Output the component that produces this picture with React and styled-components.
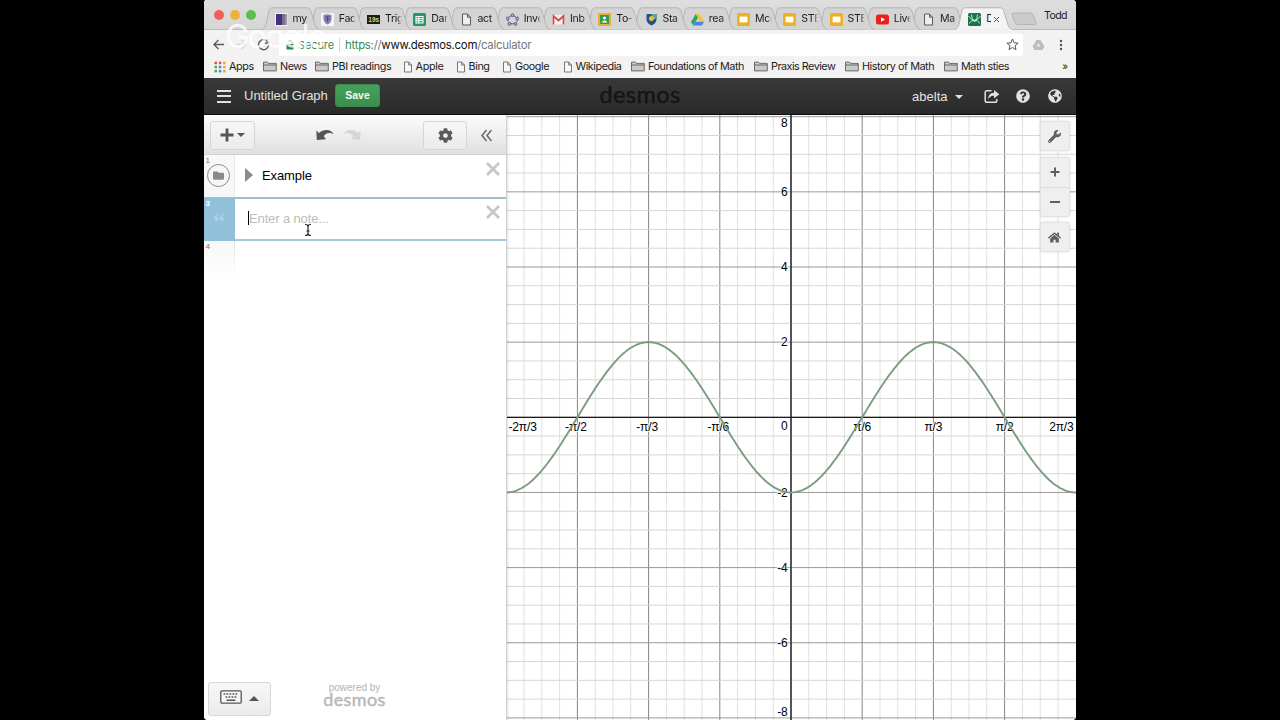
import React from 'react';
import styled, { createGlobalStyle, css } from 'styled-components';
import { FaWrench, FaCog, FaHome, FaQuestionCircle, FaGlobeAmericas, FaFolder } from 'react-icons/fa';

const Global = createGlobalStyle`
  * { box-sizing: border-box; }
  body { margin: 0; background: #000; overflow: hidden; }
`;

const Stage = styled.div`
  width: 1280px;
  height: 720px;
  background: #000;
  display: flex;
  justify-content: center;
  font-family: "Liberation Sans", Arial, sans-serif;
`;

const Window = styled.div`
  position: relative;
  width: 872px;
  height: 720px;
  display: flex;
  flex-direction: column;
  background: #fff;
  border-radius: 3px 4px 4px 4px;
  overflow: hidden;
`;

/* ---------- browser chrome ---------- */

const Chrome = styled.div`
  height: 78px;
  flex: none;
  display: flex;
  flex-direction: column;
  background: #f2f2f2;
  font-family: Inter, sans-serif;
  color: #1c1c1c;
`;

const TabStrip = styled.div`
  height: 30px;
  flex: none;
  display: flex;
  background: linear-gradient(#dedede, #d6d6d6);
  border-bottom: 1px solid #bcbcbc;
`;

const Lights = styled.div`
  width: 57.5px;
  flex: none;
  display: flex;
  gap: 6px;
  padding: 10px 0 0 9.5px;
`;

const Light = styled.span`
  width: 10px;
  height: 10px;
  border-radius: 50%;
  background: ${(p) => p.$color};
`;

const TabItem = styled.div`
  position: relative;
  z-index: ${(p) => p.$z};
  width: 46.25px;
  height: 30px;
  flex: none;
  display: flex;
  align-items: center;
  gap: 5px;
  padding: 8px 0 0 13px;
  & > * { flex: none; }
`;

const TabShape = styled.svg`
  position: absolute;
  left: 0;
  top: 7px;
`;

const TabIcon = styled.svg`
  position: relative;
  width: 13px;
  height: 13px;
`;

const TabLabel = styled.span`
  position: relative;
  width: ${(p) => p.$w}px;
  overflow: hidden;
  white-space: nowrap;
  font-size: 10.6px;
  line-height: 16px;
  letter-spacing: -0.35px;
  ${(p) => p.$fade && css`mask-image: linear-gradient(90deg, #000 75%, transparent);`}
`;

const TabClose = styled.svg`
  position: relative;
  width: 7px;
  height: 7px;
  margin-left: -3px;
`;

const NewTab = styled.svg`
  width: 28px;
  height: 14px;
  margin: 12px 0 0 8px;
`;

const Profile = styled.span`
  margin: 9px 9px 0 auto;
  font-size: 10.6px;
  line-height: 14px;
  letter-spacing: -0.6px;
`;

const Toolbar = styled.div`
  height: 27px;
  flex: none;
  display: flex;
  align-items: center;
  padding: 2px 9px 0 8px;
`;

const NavIcon = styled.svg`
  width: 13px;
  height: 13px;
  margin-right: ${(p) => p.$mr}px;
  flex: none;
`;

const Address = styled.div`
  width: 744px;
  height: 22px;
  flex: none;
  display: flex;
  align-items: center;
  background: #fff;
  padding: 0 4px 0 6px;
  font-size: 11.4px;
  letter-spacing: -0.26px;
  color: #777;
  border-radius: 2px;
`;

const Secure = styled.span`
  width: 38px;
  margin-left: 3px;
  color: #398a53;
  font-size: 11px;
  letter-spacing: -0.1px;
`;

const Divider = styled.span`
  width: 1px;
  height: 14px;
  background: #d5d5d5;
  margin: 0 5px 0 3px;
`;

const Https = styled.span`color: #398a53;`;
const Host = styled.span`color: #111;`;

const StarIcon = styled.svg`
  width: 13px;
  height: 13px;
  margin-left: auto;
`;

const Bookmarks = styled.div`
  height: 19px;
  flex: none;
  display: flex;
  align-items: center;
  padding-left: 10px;
`;

const Bookmark = styled.div`
  width: ${(p) => p.$w}px;
  flex: none;
  display: flex;
  align-items: center;
  gap: 3px;
  white-space: nowrap;
  font-size: 10.8px;
  letter-spacing: ${(p) => p.$ls}px;
`;

const More = styled.span`
  margin: -2px 8px 0 auto;
  font-size: 10px;
`;

const Watermark = styled.div`
  position: absolute;
  z-index: 30;
  left: 21px;
  top: 16px;
  font: 33px/40px Inter, sans-serif;
  letter-spacing: -2px;
  color: rgba(255, 255, 255, 0.78);
`;

const DocIcon = () => (
  <svg width="10" height="12" viewBox="0 0 10 12" fill="#f7f7f7" stroke="#6a6a6a" strokeWidth="0.9">
    <path d="M1.5 1h4.2l2.8 3v7h-7zM5.7 1v3h2.8" />
  </svg>
);

const FolderIcon = () => (
  <svg width="14" height="11" viewBox="0 0 14 11" fill="#c9c9c9" stroke="#5f5f5f" strokeWidth="0.9">
    <path d="M.5 9.9V1.1h4l1 1.3h7.800v7.5zM.5 4h12.800" />
  </svg>
);

const AppsIcon = () => {
  const colors = ['#e0523f', '#e0523f', '#e8a33a', '#5aa055', '#4e86d8', '#e8a33a', '#5aa055', '#4e86d8', '#e8a33a'];
  return (
    <svg width="12" height="12">
      {colors.map((c, i) => (
        <rect key={i} x={0.5 + (i % 3) * 4.3} y={0.7 + Math.floor(i / 3) * 4.1} width="2.5" height="2.5" fill={c} />
      ))}
    </svg>
  );
};

const slides = (
  <g><rect x="0" y="0" width="13" height="13" rx="1.5" fill="#edb125" /><rect x="2.6" y="3.6" width="7.8" height="5.8" fill="#fff" /></g>
);

const tabIcons = {
  my: <g><rect width="13" height="13" fill="#f3f0f8" /><rect x="1" y="1" width="6" height="11" fill="#44307e" /><rect x="7" y="1" width="3" height="11" fill="#77718a" /><rect x="10" y="1" width="2.2" height="11" fill="#9a96a5" /></g>,
  shield: <g><rect width="13" height="13" fill="#f5f4fa" /><path d="M2.5 2q4-1.5 8 0v4q-.5 4-4 5.6-3.5-1.6-4-5.6z" fill="#8b82b4" /><path d="M4 4h5M4.5 6.5h4M6.5 3v6" stroke="#564b8c" /></g>,
  trig: <g><rect y="2" width="13" height="9" fill="#1b1b19" /><text x="1.3" y="9.3" fontSize="6.5" fontWeight="700" fill="#d9dd7b" fontFamily="Liberation Sans">19s</text></g>,
  sheet: <g><rect width="13" height="13" rx="1.5" fill="#1c9c60" /><path d="M3 3.5h7v6.5H3zM3 5.7h7M3 7.8h7M5.8 3.5v6.5" fill="none" stroke="#fff" strokeWidth="1.1" /></g>,
  doc: <path d="M2.5 1h5l3 3.2v7.8h-8zM7.5 1v3.2h3" fill="#eee" stroke="#5b5b5b" />,
  geo: <g fill="#b6b6dd" stroke="#5b5b86" strokeWidth="1"><ellipse cx="6.5" cy="6.8" rx="4.8" ry="4" fill="none" />{[[6.5, 2.2], [11.3, 5.4], [9.5, 11], [3.5, 11], [1.7, 5.4]].map(([x, y]) => <circle key={x} cx={x} cy={y} r="1.4" />)}</g>,
  gmail: <g><rect x=".5" y="2" width="12" height="9.5" fill="#f5f0ef" /><path d="M1.5 11.5V3l5 4.5 5-4.5v8.5" fill="none" stroke="#d54b40" strokeWidth="1.7" /></g>,
  classroom: <g><rect width="13" height="13" fill="#e7b32c" /><rect x="2" y="2" width="9" height="9" fill="#38985a" /><circle cx="6.5" cy="5" r="1.5" fill="#fff" /><path d="M3.5 9.5q3-4 6 0z" fill="#fff" /></g>,
  state: <g><path d="M1.5 1h10v6q-1 4-5 5.5-4-1.5-5-5.5z" fill="#23518c" /><path d="M6.5 1h5v5h-5z" fill="#58a3a0" /><circle cx="6.5" cy="5.5" r="2.5" fill="#e6c13d" /></g>,
  drive: <g><path d="M4.7 1h4l4.3 7.5H9z" fill="#f4c534" /><path d="M4.7 1 0 9l2.2 3.5L7 4.7z" fill="#2da566" /><path d="M4 8.7h9l-2.2 3.8H2.2z" fill="#4687e8" /></g>,
  slides,
  youtube: <g><rect x="0" y="1.5" width="13" height="10" rx="2.5" fill="#e8211c" /><path d="M5 4.2v4.6l4-2.3z" fill="#fff" /></g>,
  desmos: <g><rect width="13" height="13" rx="1.5" fill="#16764a" /><path d="M.5 3q6 9 12 0M1 10.5q5.5-7 11 0M3.5 1.5q0 5 3 7.5 3-2.5 3-7.5" fill="none" stroke="#d8efe2" strokeWidth=".9" /></g>,
};

const tabs = [
  ['my', 'my'], ['shield', 'Fac'], ['trig', 'Trig'], ['sheet', 'Dar'], ['doc', 'act'], ['geo', 'Inve'],
  ['gmail', 'Inb'], ['classroom', 'To-'], ['state', 'Sta'], ['drive', 'rea'], ['slides', 'Mcc'], ['slides', 'STE'],
  ['slides', 'STE'], ['youtube', 'Live'], ['doc', 'Ma'], ['desmos', 'D'],
];

function Tab({ icon, label, index, active }) {
  return (
    <TabItem $z={active ? 20 : 18 - index}>
      <TabShape width="60" height="24">
        <path
          d="M0 22.5Q3 21.5 4 17.5L7 3Q8 .8 10 .8H45.5Q47.5 .8 48.5 3L53 18Q54.5 22 57 22.5"
          fill={active ? '#f4f4f4' : '#d4d4d4'}
          stroke="#b0b0b0"
          strokeWidth=".9"
        />
        {active && <path d="M1 23h56" stroke="#f4f4f4" strokeWidth="1.5" />}
      </TabShape>
      <TabIcon viewBox="0 0 13 13">{tabIcons[icon]}</TabIcon>
      <TabLabel $w={active ? 5 : 17} $fade={!active}>{label}</TabLabel>
      {active && <TabClose viewBox="0 0 7 7"><path d="M1 1l5 5M6 1L1 6" stroke="#555" /></TabClose>}
    </TabItem>
  );
}

const bookmarks = [
  ['apps', 'Apps', 49, -0.4], ['folder', 'News', 52, -0.5], ['folder', 'PBI readings', 87.5, -0.41], ['doc', 'Apple', 53, -0.3],
  ['doc', 'Bing', 46.5, -0.4], ['doc', 'Google', 60.5, -0.4], ['doc', 'Wikipedia', 68.5, -0.45], ['folder', 'Foundations of Math', 123, -0.47],
  ['folder', 'Praxis Review', 91, -0.5], ['folder', 'History of Math', 99, -0.45], ['folder', 'Math sties', 70, -0.45],
];

function Browser() {
  return (
    <Chrome>
      <TabStrip>
        <Lights><Light $color="#f0605a" /><Light $color="#f0b040" /><Light $color="#5abf4c" /></Lights>
        {tabs.map(([icon, label], i) => <Tab key={i} icon={icon} label={label} index={i} active={i === 15} />)}
        <NewTab viewBox="0 0 28 14"><path d="M3 1h17q2 0 3 2l3 8q.5 1.5-2 1.5H8q-2 0-3-2L2 3Q1.5 1 3 1z" fill="#cbcbcb" stroke="#b0b0b0" strokeWidth=".9" /></NewTab>
        <Profile>Todd</Profile>
      </TabStrip>
      <Toolbar>
        <NavIcon $mr={10} viewBox="0 0 13 13"><path d="M12 6.5H2M6.5 2L2 6.5 6.5 11" fill="none" stroke="#5a5a5a" strokeWidth="1.3" /></NavIcon>
        <NavIcon $mr={9} viewBox="0 0 13 13"><path d="M1 6.5h10M6.5 2L11 6.5 6.5 11" fill="none" stroke="#d4d4d4" strokeWidth="1.3" /></NavIcon>
        <NavIcon $mr={9} viewBox="0 0 13 13"><path d="M10.8 4A5 5 0 1 0 11.5 7.5M11.5 1v4h-4" fill="none" stroke="#5a5a5a" strokeWidth="1.4" /></NavIcon>
        <Address>
          <svg width="10" height="12" viewBox="0 0 10 12"><rect x="1.5" y="5" width="7" height="5.5" fill="#2f8550" /><path d="M3 5V3.5a2 2 0 0 1 4 0V5" fill="none" stroke="#a8cbb5" /></svg>
          <Secure>Secure</Secure>
          <Divider />
          <Https>https:</Https>//<Host>www.desmos.com</Host>/calculator
          <StarIcon viewBox="0 0 13 13"><path d="M6.5 1l1.6 3.8 4 .3-3.1 2.6 1 4-3.5-2.2L3 11.7l1-4L.9 5.1l4-.3z" fill="none" stroke="#555" /></StarIcon>
        </Address>
        <svg width="13" height="12" viewBox="0 0 13 12" style={{ marginLeft: 9 }}><path d="M4.5 1h4l4 6.5-2 3.5h-8l-2-3.5z" fill="#bdbdbd" /><path d="M6.5 4.2L4.7 7.5h3.7z" fill="#eee" /></svg>
        <svg width="4" height="14" viewBox="0 0 4 14" style={{ marginLeft: 14 }}><g fill="#4f4f4f"><circle cx="2" cy="3" r="1.2" /><circle cx="2" cy="7" r="1.2" /><circle cx="2" cy="11" r="1.2" /></g></svg>
      </Toolbar>
      <Bookmarks>
        {bookmarks.map(([kind, label, w, ls]) => (
          <Bookmark key={label} $w={w} $ls={ls}>
            {kind === 'apps' && <AppsIcon />}
            {kind === 'folder' && <FolderIcon />}
            {kind === 'doc' && <DocIcon />}
            <span>{label}</span>
          </Bookmark>
        ))}
        <More>»</More>
      </Bookmarks>
    </Chrome>
  );
}

/* ---------- desmos header ---------- */

const Header = styled.header`
  height: 37px;
  flex: none;
  display: grid;
  grid-template-columns: 1fr auto 1fr;
  align-items: center;
  background: linear-gradient(#393939, #2a2a2a);
  border-bottom: 1px solid #0b0b0b;
  color: #e2e2e2;
`;

const HeaderLeft = styled.div`
  display: flex;
  align-items: center;
  padding-left: 13px;
`;

const HeaderRight = styled.div`
  display: flex;
  align-items: center;
  justify-content: flex-end;
  padding-right: 14px;
  font-size: 13px;
`;

const Burger = styled.div`
  width: 14px;
  height: 13px;
  border-top: 2px solid #e0e0e0;
  border-bottom: 2px solid #e0e0e0;
  display: flex;
  align-items: center;
  &::before { content: ''; width: 100%; height: 2px; background: #e0e0e0; }
`;

const Title = styled.div`
  width: 84px;
  margin: -1px 7px 0 13px;
  font-size: 13px;
  white-space: nowrap;
`;

const SaveButton = styled.button`
  width: 45px;
  height: 23px;
  margin-top: -1px;
  border: 1px solid #3b8b4c;
  border-radius: 3px;
  background: linear-gradient(#46a05a, #3c8e4e);
  color: #f2f8f3;
  padding: 0 0 1px;
  font: bold 10.5px "Liberation Sans", sans-serif;
`;

const Logo = styled.div`
  font-family: Lato, sans-serif;
  font-size: ${(p) => p.$size}px;
  line-height: 1;
  margin-top: ${(p) => p.$mt}px;
  color: ${(p) => p.$color};
  letter-spacing: ${(p) => p.$ls}px;
  -webkit-text-stroke: 0.5px ${(p) => p.$color};
`;

const Caret = styled.span`
  border: ${(p) => p.$s || 4}px solid transparent;
  border-bottom: 0;
  border-top-color: ${(p) => p.$color || '#e2e2e2'};
  margin: ${(p) => p.$m || '0'};
  transform: ${(p) => (p.$up ? 'rotate(180deg)' : 'none')};
`;

/* ---------- expression panel ---------- */

const Body = styled.main`
  flex: 1;
  min-height: 0;
  display: flex;
`;

const Panel = styled.section`
  width: 303px;
  flex: none;
  display: flex;
  flex-direction: column;
  background: #fff;
  border-right: 1px solid #d2d2d2;
  box-shadow: 1px 0 2px rgba(0, 0, 0, 0.12);
  z-index: 1;
`;

const PanelBar = styled.div`
  height: 40px;
  flex: none;
  display: flex;
  align-items: center;
  background: linear-gradient(#fcfcfc, #e0e0e0);
  border-bottom: 1px solid #d2d2d2;
  padding: 1px 14px 0 6px;
  color: #555;
`;

const BarButton = styled.button`
  display: flex;
  align-items: center;
  justify-content: center;
  gap: 3px;
  width: ${(p) => p.$w}px;
  height: ${(p) => p.$h || 29}px;
  padding: ${(p) => p.$pad || 0};
  border: 1px solid #d6d6d6;
  border-radius: 3px;
  background: linear-gradient(#f7f7f7, #ebebeb);
  color: #5a5a5a;
`;

const History = styled.div`
  display: flex;
  gap: 9px;
  margin-left: 61px;
  margin-right: auto;
`;

const Row = styled.div`
  height: ${(p) => p.$h}px;
  flex: none;
  display: flex;
  border-bottom: ${(p) => (p.$selected ? '2px solid #a7c8d6' : p.$last ? '0' : '2px solid #a5bcca')};
`;

const Gutter = styled.div`
  width: 31px;
  flex: none;
  display: flex;
  flex-direction: column;
  align-items: center;
  padding-top: 1px;
  font-size: 8px;
  line-height: 9px;
  color: ${(p) => (p.$selected ? '#fff' : '#777')};
  background: ${(p) => (p.$selected ? '#90c0da' : p.$fade ? 'linear-gradient(#f7f7f7, #fff)' : '#f7f7f7')};
  border-right: 1px solid ${(p) => (p.$selected ? '#90c0da' : '#e8e8e8')};
  ${(p) => p.$selected && css`margin-bottom: -2px; margin-top: -1px;`}
  ${(p) => p.$fade && css`border-image: linear-gradient(#ddd, #fff) 1;`}
`;

const RowNumber = styled.span`
  align-self: flex-start;
  padding-left: 1.5px;
  font-weight: ${(p) => (p.$bold ? 700 : 400)};
`;

const FolderBadge = styled.div`
  width: 23px;
  height: 23px;
  border: 1.5px solid #8a8a8a;
  border-radius: 50%;
  display: flex;
  align-items: center;
  justify-content: center;
  color: #8a8a8a;
  margin-top: -1px;
  margin-left: -1px;
`;

const Quote = styled.span`
  font: bold 25px/24px "Liberation Serif", serif;
  color: #add1e4;
  padding-top: 2px;
`;

const RowBody = styled.div`
  flex: 1;
  display: flex;
  align-items: center;
  padding: 0 5px ${(p) => p.$pb}px ${(p) => p.$pl}px;
  font-size: 13px;
  letter-spacing: ${(p) => p.$ls || 0}px;
  color: ${(p) => p.$color || '#000'};
`;

const TextCaret = styled.span`
  width: 1px;
  height: 14px;
  background: #000;
`;

const Disclosure = styled.span`
  border: 7px solid transparent;
  border-left: 8px solid #8a8a8a;
  border-right: 0;
  margin-right: 9px;
`;

const Delete = styled.svg`
  width: 16px;
  height: 16px;
  margin-left: auto;
  align-self: flex-start;
  margin-top: ${(p) => p.$mt}px;
`;

const Blank = styled.div`flex: 1;`;

const PanelFooter = styled.div`
  height: 40px;
  flex: none;
  display: flex;
  padding: 2px 0 0 4px;
`;

const Powered = styled.div`
  display: flex;
  flex-direction: column;
  align-items: center;
  margin-left: 50.5px;
  width: 66px;
  font-size: 10px;
  line-height: 12px;
  color: #b4b4b4;
`;

const IBeam = styled.svg`
  position: absolute;
  z-index: 5;
  left: 100px;
  top: 223px;
`;

const CloseX = ({ mt }) => (
  <Delete viewBox="0 0 16 16" $mt={mt}><path d="M2 2l12 12M14 2L2 14" stroke="#c6c6c6" strokeWidth="2.8" /></Delete>
);

function Expressions() {
  return (
    <Panel>
      <PanelBar>
        <BarButton $w={45}>
          <svg width="14" height="14"><path d="M7 .5v13M.5 7h13" stroke="#555" strokeWidth="2.8" /></svg>
          <Caret $color="#555" $s={4.5} />
        </BarButton>
        <History>
          <svg width="18" height="12"><path d="M.3 1.5L3 4C7 .5 14.5-1 17.8 5.5 13.5 3 10 4 7.8 7.2L10 10.2.8 11z" fill="#555" /></svg>
          <svg width="18" height="12"><path d="M17.7 1.5L15 4C11 .5 3.5-1 .2 5.5 4.5 3 8 4 10.2 7.2L8 10.2l9.2.8z" fill="#d6d6d6" /></svg>
        </History>
        <BarButton $w={44}><FaCog size={15} /></BarButton>
        <svg width="11" height="13" style={{ marginLeft: 14 }}><path d="M5.5 1L1 6.5l4.5 5.5M10.5 1L6 6.5l4.5 5.5" fill="none" stroke="#666" strokeWidth="1.5" /></svg>
      </PanelBar>
      <Row $h={44}>
        <Gutter>
          <RowNumber>1</RowNumber>
          <FolderBadge><FaFolder size={11} /></FolderBadge>
        </Gutter>
        <RowBody $pl={10} $pb={2} $ls={-0.1}><Disclosure />Example<CloseX mt={6} /></RowBody>
      </Row>
      <Row $h={42} $selected>
        <Gutter $selected>
          <RowNumber $bold>3</RowNumber>
          <Quote>“</Quote>
        </Gutter>
        <RowBody $pl={13} $pb={2} $ls={-0.13} $color="#bcbcbc"><TextCaret />Enter a note...<CloseX mt={5} /></RowBody>
      </Row>
      <Row $h={37} $last>
        <Gutter $fade><RowNumber>4</RowNumber></Gutter>
      </Row>
      <Blank />
      <PanelFooter>
        <BarButton $w={63} $h={34} $pad="0 0 4px">
          <svg width="22" height="14" viewBox="0 0 22 14" style={{ marginRight: 4 }}>
            <rect x=".8" y=".8" width="20.4" height="12.4" rx="1.2" fill="#f7f7f7" stroke="#555" strokeWidth="1.3" />
            <path d="M3.5 4h15M5.5 7h11" stroke="#555" strokeWidth="1.6" strokeDasharray="1.8 1.2" />
            <path d="M6.5 10.2h9" stroke="#555" strokeWidth="1.5" />
          </svg>
          <Caret $color="#555" $s={5} $m="3px 0 0" $up />
        </BarButton>
        <Powered>
          <span>powered by</span>
          <Logo $size={18} $ls={0.4} $mt={-4} $color="#b9b9b9">desmos</Logo>
        </Powered>
      </PanelFooter>
    </Panel>
  );
}

/* ---------- graph ---------- */

const GraphArea = styled.section`
  position: relative;
  flex: 1;
  min-width: 0;
  background: #fff;
`;

const Plot = styled.svg`
  display: block;
  font-family: "Liberation Sans", Arial, sans-serif;
  font-size: 12px;
`;

const AxisLabel = styled.text`
  fill: #000;
  stroke: #fff;
  stroke-width: 2px;
  stroke-opacity: 0.7;
  paint-order: stroke;
  letter-spacing: -0.15px;
`;

const Controls = styled.div`
  position: absolute;
  right: 6.5px;
  top: 6px;
  display: flex;
  flex-direction: column;
  gap: 5.5px;
`;

const ControlGroup = styled.div`
  width: 30px;
  border: 1px solid #e2e2e2;
  border-radius: 3px;
  background: #efefef;
  box-shadow: 0 0 3px rgba(0, 0, 0, 0.12);
`;

const Control = styled.button`
  width: 100%;
  height: ${(p) => p.$h}px;
  padding: 0;
  border: 0;
  background: none;
  display: flex;
  align-items: center;
  justify-content: center;
  color: #606060;
  & + & { border-top: 1px solid #dcdcdc; }
`;

const OX = 284;
const OY = 302.3;
const SX = 71.2;
const SY = 75.15;
const range = (a, b) => Array.from({ length: b - a + 1 }, (_, i) => a + i);

const curve = range(0, 285)
  .map((i) => {
    const x = i * 2;
    const y = OY + SY * Math.cos(((x - OX) / SX) * (Math.PI / 2));
    return `${i ? 'L' : 'M'}${x} ${y.toFixed(2)}`;
  })
  .join('');

const xLabels = [[-3, '-π/2'], [-2, '-π/3'], [-1, '-π/6'], [1, 'π/6'], [2, 'π/3'], [3, 'π/2']];
const yLabels = [[3, '6'], [2, '4'], [1, '2'], [-1, '-2'], [-2, '-4'], [-3, '-6']];

function Graph() {
  return (
    <GraphArea>
      <Plot width="569" height="605">
        {range(-15, 15).map((i) => (
          <path key={`v${i}`} d={`M${OX + (i * SX) / 4} 0V605`} stroke={i % 4 ? '#e0e0e0' : '#858585'} strokeWidth="1" />
        ))}
        {range(-16, 16).map((i) => (
          <path key={`h${i}`} d={`M0 ${OY - (i * SY) / 4}H569`} stroke={i % 4 ? '#d6d6d6' : '#999'} strokeWidth="1" />
        ))}
        <path d={`M0 ${OY}H569M${OX} 0V605`} stroke="#1a1a1a" strokeWidth="1.3" />
        {xLabels.map(([k, t]) => (
          <AxisLabel key={t} x={OX + k * SX - (k < 0 ? 1.5 : 0)} y="316.4" textAnchor="middle">{t}</AxisLabel>
        ))}
        <AxisLabel x="1.5" y="316.4">-2π/3</AxisLabel>
        <AxisLabel x="566.5" y="316.4" textAnchor="end">2π/3</AxisLabel>
        {yLabels.map(([k, t]) => (
          <AxisLabel key={t} x={OX - 3.5} y={OY - k * SY + 4.3} textAnchor="end">{t}</AxisLabel>
        ))}
        <AxisLabel x={OX - 3.5} y="12.4" textAnchor="end">8</AxisLabel>
        <AxisLabel x={OX - 3.5} y="315" textAnchor="end">0</AxisLabel>
        <AxisLabel x={OX - 3.5} y="601" textAnchor="end">-8</AxisLabel>
        <path d={curve} fill="none" stroke="#7c9c80" strokeWidth="1.9" />
      </Plot>
      <Controls>
        <ControlGroup><Control $h={28}><FaWrench size={13} /></Control></ControlGroup>
        <ControlGroup>
          <Control $h={29}><svg width="10" height="10"><path d="M5 .5v9M.5 5h9" stroke="#606060" strokeWidth="2" /></svg></Control>
          <Control $h={29}><svg width="10" height="4"><path d="M0 2h10" stroke="#606060" strokeWidth="2" /></svg></Control>
        </ControlGroup>
        <ControlGroup><Control $h={28}><FaHome size={13} /></Control></ControlGroup>
      </Controls>
    </GraphArea>
  );
}

const ShareIcon = styled.svg`
  width: 16px;
  height: 15px;
  margin-right: 16.5px;
`;

export default function App() {
  return (
    <Stage>
      <Global />
      <Window>
        <Browser />
        <Watermark>Google</Watermark>
        <Header>
          <HeaderLeft>
            <Burger />
            <Title>Untitled Graph</Title>
            <SaveButton>Save</SaveButton>
          </HeaderLeft>
          <Logo $size={23.5} $ls={0.4} $mt={-2} $color="#151515">desmos</Logo>
          <HeaderRight>
            abelta
            <Caret $m="2px 21px 0 7px" />
            <ShareIcon viewBox="0 0 16 15">
              <path d="M7.5 1.7H3Q1.2 1.7 1.2 3.5v8Q1.2 13.3 3 13.3h8q1.8 0 1.8-1.8V10" fill="none" stroke="#e2e2e2" strokeWidth="1.5" />
              <path d="M4.3 10.3Q4 4 10 3.7V1l5.3 4.3L10 9.5V6.8Q6 6.5 4.3 10.3z" fill="#e2e2e2" />
            </ShareIcon>
            <FaQuestionCircle size={14} style={{ marginRight: 18 }} />
            <FaGlobeAmericas size={14} />
          </HeaderRight>
        </Header>
        <Body>
          <Expressions />
          <Graph />
        </Body>
        <IBeam width="8" height="14"><path d="M1 1.5q3 0 3 2 0-2 3-2M4 3v8M1 12.5q3 0 3-2 0 2 3 2M2.5 8h3" fill="none" stroke="#222" strokeWidth="1.2" /></IBeam>
      </Window>
    </Stage>
  );
}
